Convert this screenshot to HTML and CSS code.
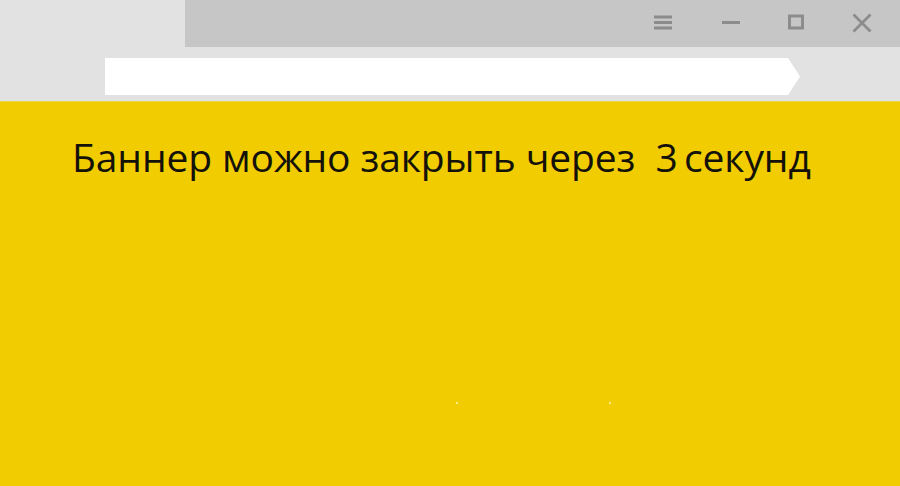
FILE: index.html
```html
<!DOCTYPE html>
<html lang="ru">
<head>
<meta charset="utf-8">
<title>Баннер</title>
<link rel="stylesheet" href="styles.css">
</head>
<body>
<div class="page">
  <header class="chrome">
    <div class="tabbar">
      <span class="ctl ctl-menu">
        <svg width="20" height="20" viewBox="0 0 20 20"><path d="M1 4H19M1 9.5H19M1 15H19" stroke="#8c8c8c" stroke-width="3" fill="none"/></svg>
      </span>
      <span class="ctl ctl-min">
        <svg width="20" height="20" viewBox="0 0 20 20"><path d="M1 9.5H19" stroke="#8c8c8c" stroke-width="3" fill="none"/></svg>
      </span>
      <span class="ctl ctl-max">
        <svg width="20" height="20" viewBox="0 0 20 20"><rect x="3.5" y="3" width="13" height="12" stroke="#8c8c8c" stroke-width="3" fill="none"/></svg>
      </span>
      <span class="ctl ctl-close">
        <svg width="20" height="20" viewBox="0 0 20 20"><path d="M1.5 1.5L18.5 18.5M18.5 1.5L1.5 18.5" stroke="#8c8c8c" stroke-width="2.8" fill="none"/></svg>
      </span>
    </div>
    <div class="addrrow">
      <div class="addr"></div>
    </div>
  </header>
  <main class="banner">
    <p class="msg">Баннер можно закрыть через&nbsp; 3&thinsp;секунд</p>
    <span class="spark spark-a"></span>
    <span class="spark spark-b"></span>
  </main>
</div>
</body>
</html>
```
FILE: styles.css
```css
html, body {
  margin: 0;
  padding: 0;
}
body {
  width: 900px;
  height: 486px;
  overflow: hidden;
  font-family: "Open Sans", "Noto Sans", sans-serif;
}
.page {
  display: flex;
  flex-direction: column;
  height: 486px;
}
.chrome {
  height: 101px;
  background: #e2e2e2;
  display: flex;
  flex-direction: column;
  border-bottom: 1px solid #eed84a;
}
.tabbar {
  margin-left: 185px;
  height: 45px;
  padding-bottom: 2px;
  background: #c6c6c6;
  display: flex;
  justify-content: flex-end;
  align-items: center;
  padding-right: 28px;
}
.ctl {
  display: flex;
  width: 20px;
  height: 20px;
}
.ctl-menu { margin-right: 48px; }
.ctl-min { margin-right: 45px; }
.ctl-max { margin-right: 46px; }
.addrrow {
  margin-top: 11px;
  padding-left: 105px;
}
.addr {
  width: 695px;
  height: 37px;
  background: #ffffff;
  clip-path: polygon(0 0, calc(100% - 12px) 0, 100% 50%, calc(100% - 12px) 100%, 0 100%);
}
.banner {
  flex: 1;
  background: #f0cc00;
  position: relative;
}
.msg {
  margin: 0;
  padding: 31px 0 0 72px;
  font-size: 39px;
  font-weight: 500;
  line-height: 48px;
  color: #141208;
  white-space: nowrap;
  letter-spacing: -0.1px;
}
.spark {
  position: absolute;
  width: 2px;
  height: 2px;
  background: #fff6b8;
  border-radius: 1px;
}
.spark-a { left: 456px; top: 300px; }
.spark-b { left: 609px; top: 300px; }
```
